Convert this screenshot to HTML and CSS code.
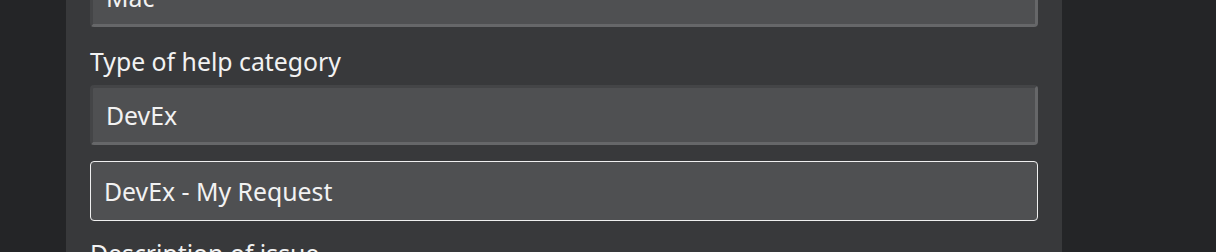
FILE: index.html
```html
<!DOCTYPE html>
<html>
<head>
<meta charset="utf-8">
<link rel="stylesheet" href="styles.css">
</head>
<body>
<div class="page">
  <div class="panel">
    <div class="field readonly"><span class="value">Mac</span></div>
    <label class="label">Type of help category</label>
    <div class="field readonly"><span class="value">DevEx</span></div>
    <div class="field outlined"><span class="value">DevEx - My Request</span></div>
    <label class="label label-next">Description of issue</label>
  </div>
</div>
</body>
</html>
```
FILE: styles.css
```css
html, body {
  margin: 0;
  padding: 0;
  background: #242527;
  height: 252px;
  overflow: hidden;
}
.page {
  display: flex;
  font-family: "Noto Sans", sans-serif;
  color: #f2f2f2;
}
.panel {
  margin-left: 66px;
  margin-top: -33px;
  width: 948px;
  padding: 0 24px 40px;
  background: #38393b;
  display: flex;
  flex-direction: column;
}
.field {
  box-sizing: border-box;
  height: 60px;
  background: #4f5052;
  border-radius: 4px;
  display: flex;
  align-items: center;
  font-size: 24.8px;
}
.readonly {
  border-style: solid;
  border-width: 3px;
  border-color: #444547 #666769 #666769 #444547;
  padding-left: 13px;
}
.outlined {
  border: 1px solid #f0f0f0;
  padding-left: 13px;
  margin-top: 16px;
}
.value {
  line-height: 1;
}
.label {
  font-size: 24.8px;
  line-height: 30px;
  margin: 19px 0 9px;
}
.label-next {
  margin-top: 17px;
}
```
